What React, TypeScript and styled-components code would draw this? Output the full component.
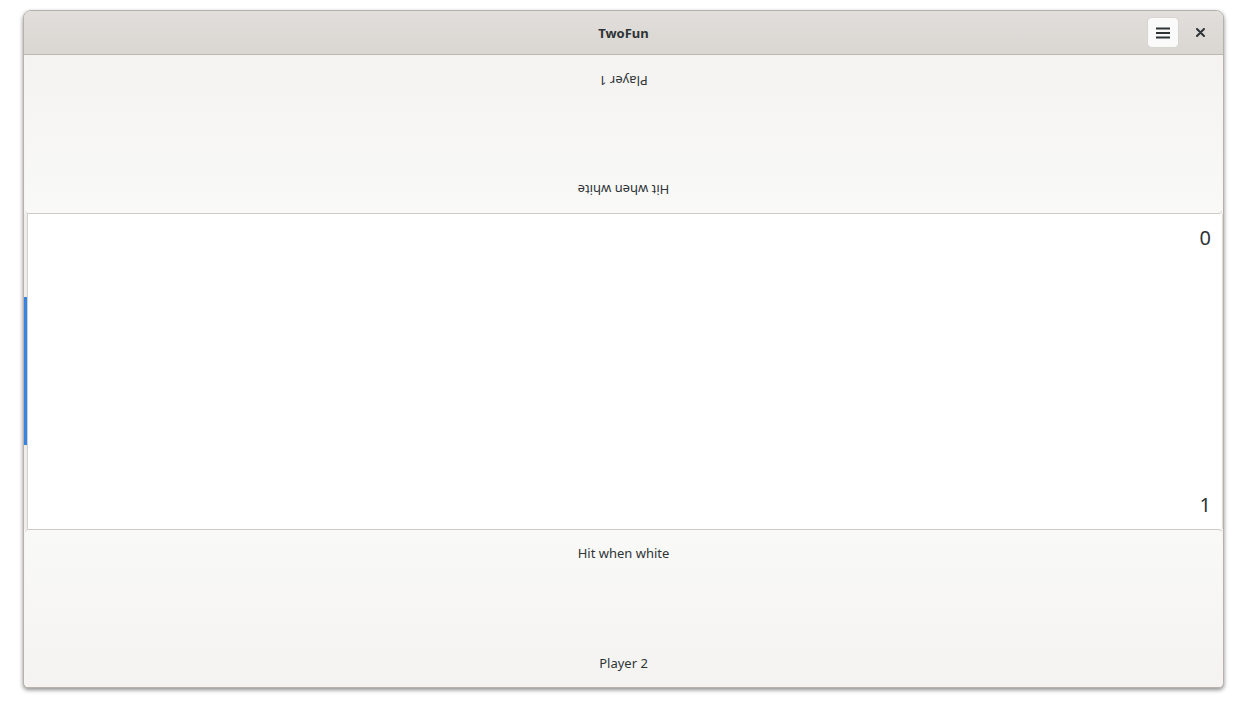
import React from "react";
import styled, { createGlobalStyle } from "styled-components";

const GlobalStyle = createGlobalStyle`
  html, body {
    margin: 0;
    padding: 0;
    background: #ffffff;
  }
  body {
    font-family: "Noto Sans", "Open Sans", sans-serif;
    color: #2e3436;
  }
`;

const Page = styled.div`
  width: 1248px;
  height: 702px;
  box-sizing: border-box;
  padding: 10px 24px 14px 23px;
  display: flex;
`;

const Window = styled.div`
  flex: 1;
  display: flex;
  flex-direction: column;
  border: 1px solid #b6b1ab;
  border-radius: 8px 8px 5px 5px;
  overflow: hidden;
  background: #f6f5f4;
  box-shadow: 0 2px 4px rgba(0, 0, 0, 0.45);
`;

const HeaderBar = styled.header`
  height: 43px;
  flex: none;
  display: flex;
  align-items: center;
  justify-content: center;
  position: relative;
  background: linear-gradient(#e1dedb, #dad6d2);
  border-bottom: 1px solid #bfb8b1;
`;

const Title = styled.div`
  font-size: 13px;
  font-weight: 700;
  color: #2e3436;
`;

const HeaderActions = styled.div`
  position: absolute;
  right: 8px;
  top: 6px;
  display: flex;
  align-items: center;
  gap: 6px;
`;

const MenuButton = styled.button`
  width: 32px;
  height: 31px;
  border: 1px solid #d8d4d0;
  border-radius: 5px;
  background: #fafafa;
  display: flex;
  align-items: center;
  justify-content: center;
  padding: 0;
`;

const CloseButton = styled.button`
  width: 30px;
  height: 31px;
  border: none;
  background: transparent;
  display: flex;
  align-items: center;
  justify-content: center;
  padding: 0;
`;

const Body = styled.main`
  flex: 1;
  display: flex;
  flex-direction: column;
`;

const Panel = styled.section<{ $flipped?: boolean }>`
  height: ${(p) => (p.$flipped ? 159 : 158)}px;
  flex: none;
  display: flex;
  flex-direction: column;
  align-items: center;
  justify-content: space-between;
  box-sizing: border-box;
  padding: ${(p) => (p.$flipped ? "13px 0 16px" : "13px 0 14px")};
  margin: 0 1px;
  background: linear-gradient(#f9f9f8, #f4f3f2);
  border-radius: 4px 4px 0 0;
  border-top: 1px solid #cfcac5;
  transform: ${(p) => (p.$flipped ? "rotate(180deg)" : "none")};
`;

const PanelText = styled.div`
  font-size: 13px;
  line-height: 20px;
  color: #2e3436;
`;

const Arena = styled.div`
  flex: 1;
  display: flex;
  background: #ffffff;
  border-right: 1px solid #dcd8d4;
`;

const Track = styled.div`
  width: 3px;
  flex: none;
  display: flex;
  flex-direction: column;
  background: #efedeb;
  border-right: 1px solid #d3cfcb;
`;

const TrackGap = styled.div<{ $size: number }>`
  flex: ${(p) => p.$size};
`;

const TrackFill = styled.div<{ $size: number }>`
  flex: ${(p) => p.$size};
  background: #3584e4;
`;

const Field = styled.div`
  flex: 1;
  display: flex;
  flex-direction: column;
  align-items: flex-end;
  justify-content: space-between;
  padding: 11px 11px 11px 0;
`;

const Score = styled.div`
  font-size: 20px;
  line-height: 26px;
  color: #2e3436;
`;

const PlayerPanel: React.FC<{ name: string; flipped?: boolean }> = ({ name, flipped }) => (
  <Panel $flipped={flipped}>
    <PanelText>Hit when white</PanelText>
    <PanelText>{name}</PanelText>
  </Panel>
);

export default function App() {
  return (
    <>
      <GlobalStyle />
      <Page>
        <Window>
          <HeaderBar>
            <Title>TwoFun</Title>
            <HeaderActions>
              <MenuButton aria-label="Menu">
                <svg width="14" height="12" viewBox="0 0 14 12">
                  <rect x="0" y="0.5" width="14" height="2" fill="#2e3436" />
                  <rect x="0" y="5" width="14" height="2" fill="#2e3436" />
                  <rect x="0" y="9.5" width="14" height="2" fill="#2e3436" />
                </svg>
              </MenuButton>
              <CloseButton aria-label="Close">
                <svg width="9" height="9" viewBox="0 0 9 9">
                  <path d="M1 1 L8 8 M8 1 L1 8" stroke="#2e3436" strokeWidth="2" strokeLinecap="round" />
                </svg>
              </CloseButton>
            </HeaderActions>
          </HeaderBar>
          <Body>
            <PlayerPanel name="Player 1" flipped />
            <Arena>
              <Track>
                <TrackGap $size={83} />
                <TrackFill $size={148} />
                <TrackGap $size={84} />
              </Track>
              <Field>
                <Score>0</Score>
                <Score>1</Score>
              </Field>
            </Arena>
            <PlayerPanel name="Player 2" />
          </Body>
        </Window>
      </Page>
    </>
  );
}
